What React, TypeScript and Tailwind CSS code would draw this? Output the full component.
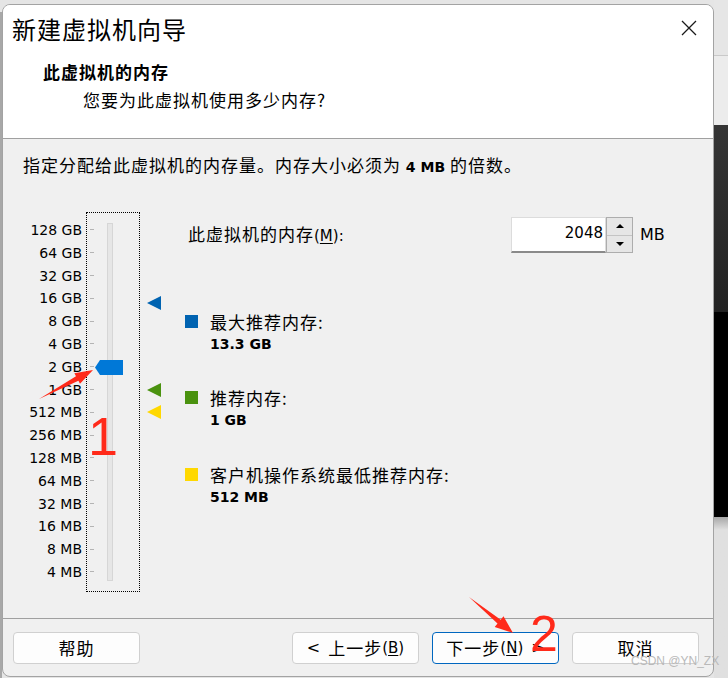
import React from 'react';

const cjk = "font-['Noto_Sans_CJK_SC',sans-serif] text-[17px] tracking-[1px]";
const lat = "font-['DejaVu_Sans','Noto_Sans_CJK_SC',sans-serif] tracking-normal";

const sizes = [
  '128 GB', '64 GB', '32 GB', '16 GB', '8 GB', '4 GB', '2 GB', '1 GB',
  '512 MB', '256 MB', '128 MB', '64 MB', '32 MB', '16 MB', '8 MB', '4 MB',
];

const legend = [
  { color: 'bg-[#0063b1]', label: '最大推荐内存:', value: '13.3 GB', gap: 'mt-0' },
  { color: 'bg-[#4a920f]', label: '推荐内存:', value: '1 GB', gap: 'mt-[30px]' },
  { color: 'bg-[#ffd800]', label: '客户机操作系统最低推荐内存:', value: '512 MB', gap: 'mt-[31px]' },
];

const Marker = ({ color, top }: { color: string; top: string }) => (
  <svg className={`absolute left-[7px] ${top}`} width="14" height="14" viewBox="0 0 14 14">
    <path d="M0 7 L14 0 V14 Z" fill={color} />
  </svg>
);

const Slider = () => (
  <div className="relative ml-[4px] h-[380px] w-[54px] border border-dotted border-black">
    <div className="absolute left-[3px] top-[5.6px] flex flex-col">
      {sizes.map((s) => (
        <div key={s} className="flex h-[22.8px] items-center">
          <div className="h-px w-[4px] bg-[#b4b4b4]" />
        </div>
      ))}
    </div>
    <div className="absolute left-[20px] top-[10px] h-[358px] w-[6px] border border-[#d6d6d6] bg-[#e6e6e6]" />
    <svg className="absolute left-[8px] top-[147px]" width="28" height="15" viewBox="0 0 28 15">
      <path d="M0 7.5 L5 0 H28 V15 H5 Z" fill="#0078d7" />
    </svg>
  </div>
);

const Button = ({ children, focused, w = 'w-[127px]' }: { children: React.ReactNode; focused?: boolean; w?: string }) => (
  <button
    type="button"
    className={`${w} flex h-[32px] items-center justify-center rounded-[4px] border bg-[#fdfdfd] text-black ${cjk} ${
      focused ? 'border-[#0067c0]' : 'border-[#d0d0d0]'
    }`}
  >
    {children}
  </button>
);

export default function App() {
  return (
    <div className="relative flex h-[678px] w-[728px] overflow-hidden bg-[#e5e5e5] text-black">
      {/* left edge of the desktop */}
      <div className="mt-[12px] w-[2px] bg-[#a8a8a8]" />

      {/* dialog */}
      <div className="mt-[4px] flex h-[673px] w-[712px] flex-col overflow-hidden rounded-[8px] border border-[#a3a3a3] bg-[#f0f0f0]">
        <header className="h-[134px] border-b border-[#a0a0a0] bg-white">
          <div className="flex items-center justify-between pl-[9px] pr-[16px] pt-[8px]">
            <h1 className="font-['Noto_Sans_CJK_SC',sans-serif] text-[24px] leading-[32px] tracking-[1px]">新建虚拟机向导</h1>
            <svg width="16" height="16" viewBox="0 0 16 16" className="-mt-[2px]">
              <path d="M1 1 L15 15 M15 1 L1 15" stroke="#1a1a1a" strokeWidth="1.3" />
            </svg>
          </div>
          <p className={`${cjk} mt-[16px] pl-[40px] font-bold leading-[22px]`}>此虚拟机的内存</p>
          <p className={`${cjk} mt-[6px] pl-[80px] leading-[22px]`}>您要为此虚拟机使用多少内存?</p>
        </header>

        <main className="h-[479px] pl-[20px] pt-[15px]">
          <p className={`${cjk} leading-[22px]`}>
            指定分配给此虚拟机的内存量。内存大小必须为<span className={`${lat} text-[14px] font-bold`}> 4 MB </span>的倍数。
          </p>

          <div className="mt-[34px] flex items-start">
            <div className={`${lat} w-[59px] pt-[7px] text-right text-[14px]`}>
              {sizes.map((s) => (
                <div key={s} className="h-[22.8px] whitespace-nowrap leading-[22.8px]">
                  {s}
                </div>
              ))}
            </div>

            <Slider />

            <div className="relative h-[380px] w-[45px]">
              <Marker color="#0063b1" top="top-[84px]" />
              <Marker color="#4a920f" top="top-[171px]" />
              <Marker color="#ffd800" top="top-[193px]" />
            </div>

            <div className="flex flex-col">
              <div className="mt-[5px] flex h-[36px] items-center">
                <div className={`${cjk} ml-[3px] w-[323px] leading-[22px]`}>
                  此虚拟机的内存<span className={`${lat} text-[15px]`}>(<span className="underline underline-offset-2">M</span>):</span>
                </div>
                <div className="flex h-[36px]">
                  <div className={`${lat} h-[36px] w-[95px] border border-b-2 border-[#dcdcdc] border-b-[#8a8a8a] bg-white pr-[2px] pt-[4px] text-right text-[15px] leading-[22px]`}>
                    2048
                  </div>
                  <div className="flex w-[27px] flex-col border border-[#adadad] bg-[#e6e6e6]">
                    <div className="flex flex-1 items-center justify-center border-b border-[#c4c4c4]">
                      <svg width="8" height="4" viewBox="0 0 8 4"><path d="M0 4 L4 0 L8 4 Z" fill="#000" /></svg>
                    </div>
                    <div className="flex flex-1 items-center justify-center">
                      <svg width="8" height="4" viewBox="0 0 8 4"><path d="M0 0 L8 0 L4 4 Z" fill="#000" /></svg>
                    </div>
                  </div>
                </div>
                <span className={`${lat} ml-[7px] text-[16px]`}>MB</span>
              </div>

              <div className="mt-[57px] flex flex-col">
                {legend.map((l) => (
                  <div key={l.label} className={`flex items-start ${l.gap}`}>
                    <div className={`mt-[5px] h-[13px] w-[13px] ${l.color}`} />
                    <div className="ml-[12px]">
                      <div className={`${cjk} h-[23px] leading-[23px]`}>{l.label}</div>
                      <div className={`${lat} h-[23px] text-[14px] font-bold leading-[23px]`}>{l.value}</div>
                    </div>
                  </div>
                ))}
              </div>
            </div>
          </div>
        </main>

        <footer className="flex h-[58px] items-start border-t border-[#a0a0a0] pl-[10px] pr-[14px] pt-[13px]">
          <Button>帮助</Button>
          <div className="ml-auto flex gap-[13px]">
            <Button>
              <span className={`${lat} mr-[8px] text-[16px]`}>&lt;</span>上一步<span className={`${lat} text-[15px]`}>(<span className="underline underline-offset-2">B</span>)</span>
            </Button>
            <Button focused w="w-[127px]">
              下一步<span className={`${lat} text-[15px]`}>(<span className="underline underline-offset-2">N</span>)</span>
              <span className={`${lat} ml-[8px] text-[16px]`}>&gt;</span>
            </Button>
            <Button>取消</Button>
          </div>
        </footer>
      </div>

      {/* desktop behind, right side */}
      <div className="flex flex-1 flex-col">
        <div className="h-[55px] bg-[#e6e6e6]" />
        <div className="h-px bg-[#c9c9c9]" />
        <div className="h-[69px] bg-[#ececec]" />
        <div className="h-[187px] bg-gradient-to-b from-[#353535] to-[#222]" />
        <div className="h-[205px] bg-black" />
        <div className="flex-1 bg-gradient-to-b from-[#a8a8a8] to-[#e0e0e0] to-[8%]" />
      </div>

      {/* annotations */}
      <svg className="pointer-events-none absolute left-0 top-0" width="728" height="678" viewBox="0 0 728 678">
        <polygon points="39,399 78.4,380.7 80,383.8 93,370 74.4,373.2 76,376.3" fill="#ff2a1a" />
        <polygon points="469,597 500.7,619.7 503.5,616.2 513,633 494.7,627 497.5,623.5" fill="#ff2a1a" />
      </svg>
      <span className="pointer-events-none absolute left-[88px] top-[404px] font-['Liberation_Sans',sans-serif] text-[54px] leading-[64px] text-[#ff2a1a]">
        1
      </span>
      <span className="pointer-events-none absolute left-[530px] top-[604px] font-['Liberation_Sans',sans-serif] text-[50px] leading-[60px] text-[#ff2a1a]">
        2
      </span>
      <span className="pointer-events-none absolute left-[631px] top-[654px] font-['Liberation_Sans',sans-serif] text-[12px] leading-[14px] text-[#b9b9b9]">
        CSDN @YN_ZX
      </span>
    </div>
  );
}
